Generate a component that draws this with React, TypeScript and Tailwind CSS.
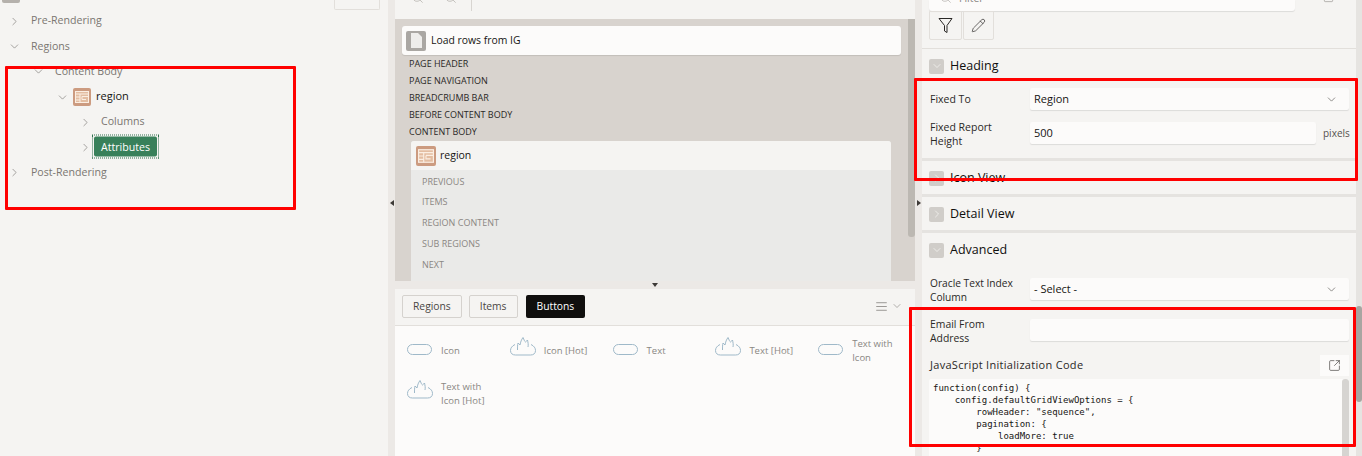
import React from "react";
import { ChevronRight, ChevronDown, Pencil, Search, AlignJustify, SquareArrowOutUpRight } from "lucide-react";

const RegionIcon = ({ size = 18 }: { size?: number }) => (
  <span className="flex items-center justify-center rounded-[2px] bg-[#cc9b80]" style={{ width: size, height: size }}>
    <svg width={size - 4} height={size - 6} viewBox="0 0 14 12" fill="none" stroke="#fbeee2" strokeWidth="1">
      <rect x="0.5" y="0.5" width="13" height="11" fill="#e3bda1" />
      <path d="M0.5 3H13.5M5 3V11.5M0.5 6H5M0.5 9H5M7 5.500H13.500M7 5.500V8.500H11" />
    </svg>
  </span>
);

const Pill = () => <span className="block h-[11px] w-[25px] rounded-full border border-[#9fb9c9]" />;

const Flame = () => (
  <svg width="26" height="19" viewBox="0 0 26 19" fill="none" stroke="#9fb9c9" strokeWidth="1" className="-mt-[6px]">
    <path d="M5 7.500C2 9 .5 11 .5 13.500c0 3 2 4.500 5 4.500h15c3 0 5-1.500 5-4.500 0-2.500-1.500-4.500-4.500-6" />
    <path d="M7.500 13c0-3 0-5 .5-7l2 2c.5-3 1.500-5.500 3-7.500 1 2 1.500 4 2.500 4.500 1-.5 1.500-1.500 2-2 .5 2.500 1 4.500 .5 7" />
  </svg>
);

const Tree = ({ indent, open, label, gap = "ml-[10px]" }: { indent: string; open?: boolean; label: React.ReactNode; gap?: string }) => (
  <div className={`flex h-[25.300px] items-center ${indent}`}>
    {open ? <ChevronDown size={13} strokeWidth={1} className="shrink-0 text-[#5f5b57]" /> : <ChevronRight size={13} strokeWidth={1} className="shrink-0 text-[#5f5b57]" />}
    <span className={`${gap} text-[#7a7671]`}>{label}</span>
  </div>
);

const Section = ({ label, open, tall }: { label: string; open?: boolean; tall?: boolean }) => (
  <div className={`flex shrink-0 items-center gap-[6px] px-[7px] ${tall ? "h-[36px] pb-[2px]" : "h-[33px] pt-px"}`}>
    <span className="flex h-[15px] w-[15px] items-center justify-center rounded-[2px] bg-[#d0cdc9] text-[#f5f4f2]">
      {open ? <ChevronDown size={12} strokeWidth={1.500} /> : <ChevronRight size={12} strokeWidth={1.500} />}
    </span>
    <span className="text-[12.500px] font-medium leading-none text-[#100f0e]">{label}</span>
  </div>
);

const Gallery = ({ hot, lines }: { hot?: boolean; lines: string[] }) => (
  <div className="flex h-[43px] items-center">
    <span className="flex w-[26px] shrink-0 justify-start">{hot ? <Flame /> : <Pill />}</span>
    <span className="ml-[8px] pt-[2px] text-[9.500px] leading-[14px] text-[#8a8783]">
      {lines.map((l) => (
        <span key={l} className="block whitespace-nowrap">{l}</span>
      ))}
    </span>
  </div>
);

const Field = ({ className = "", children }: { className?: string; children?: React.ReactNode }) => (
  <div className={`flex h-[22px] items-center rounded-[2px] bg-[#fcfbfa] px-[4px] shadow-[0_1px_1px_rgba(0,0,0,0.1)] ${className}`}>{children}</div>
);

export default function App() {
  return (
    <div className="relative flex h-[456px] w-[1362px] overflow-hidden bg-[#ece9e6] font-['Open_Sans',sans-serif] text-[11px] text-[#161513]">
      {/* Left tree */}
      <div className="relative h-full w-[388px] shrink-0 bg-[#f5f4f2] text-[10.600px]">
        <div className="flex h-[8.500px] items-start justify-between pl-[2px] pr-[8px]">
          <span className="h-[3px] w-[18px] rounded-b-[2px] bg-[#b5b1ac]" />
          <span className="h-[10px] w-[46px] rounded-b-[2px] border border-t-0 border-[#e2dfdb]" />
        </div>
        <div className="pl-[8px]">
          <Tree indent="" label="Pre-Rendering" />
          <Tree indent="" open label="Regions" />
          <Tree indent="pl-[24px]" open label="Content Body" />
          <div className="flex h-[25.300px] items-center pl-[48px]">
            <ChevronDown size={13} strokeWidth={1} className="text-[#5f5b57]" />
            <span className="ml-[4px]"><RegionIcon /></span>
            <span className="ml-[5px] pb-[2px] text-[11px]">region</span>
          </div>
          <Tree indent="pl-[71px]" label="Columns" gap="ml-[9px]" />
          <div className="flex h-[25.300px] items-center pl-[71px]">
            <ChevronRight size={13} strokeWidth={1} className="text-[#5f5b57]" />
            <span className="-my-px -mr-px -translate-y-[1.500px] border border-dotted border-[#31704f] p-px">
              <span className="block rounded-[2px] bg-[#38805a] px-[7px] py-[2px] leading-[16px] text-white">Attributes</span>
            </span>
          </div>
          <Tree indent="" label="Post-Rendering" />
        </div>
      </div>

      {/* Left splitter */}
      <div className="flex w-[7px] shrink-0 items-center justify-center pb-[50px]">
        <span className="h-0 w-0 border-y-[3px] border-r-[4px] border-y-transparent border-r-[#3d3a37]" />
      </div>

      {/* Center */}
      <div className="flex h-full w-[520px] shrink-0 flex-col">
        <div className="relative flex h-[19px] shrink-0 items-start bg-[#f5f4f2] pl-[16px]">
          <Search size={13} strokeWidth={1} className="-mt-[9px] text-[#9a9691]" />
          <Search size={13} strokeWidth={1} className="-mt-[9px] ml-[20px] text-[#9a9691]" />
          <span className="ml-[14px] h-[11px] w-px bg-[#d8d5d1]" />
          <span className="ml-[16px] -mt-[12px] text-[#3b3027]">2</span>
        </div>
        <div className="flex h-[262px] shrink-0 overflow-hidden bg-[#d8d3ce]">
          <div className="min-w-0 flex-1 pl-[7px] pt-[7px]">
            <div className="flex h-[29px] items-center gap-[5px] rounded-[3px] bg-[#fcfbfa] pl-[4px] shadow-[0_1px_1px_rgba(0,0,0,0.1)]">
              <span className="flex h-[20px] w-[20px] items-center justify-center rounded-[2px] bg-[#aaa7a3]">
                <svg width="11" height="15" viewBox="0 0 11 15"><path d="M0 0H7L11 4V15H0Z" fill="#eeedeb" /></svg>
              </span>
              <span className="text-[10.400px]">Load rows from IG</span>
            </div>
            <div className="pl-[7px] text-[9px] text-[#2a2826]">
              {["PAGE HEADER", "PAGE NAVIGATION", "BREADCRUMB BAR", "BEFORE CONTENT BODY", "CONTENT BODY"].map((t) => (
                <div key={t} className="flex h-[17px] items-center">{t}</div>
              ))}
            </div>
            <div className="ml-[9px] mr-[10px] mt-px h-[200px] overflow-hidden rounded-t-[3px] bg-[#eaeae8]">
              <div className="flex h-[29px] items-center gap-[4px] bg-[#f5f4f2] pl-[5px] text-[10.500px]">
                <RegionIcon size={20} />
                <span>region</span>
              </div>
              <div className="pl-[11px] pt-px text-[9px] text-[#8a8783]">
                {["PREVIOUS", "ITEMS", "REGION CONTENT", "SUB REGIONS", "NEXT"].map((t) => (
                  <div key={t} className="flex h-[20.800px] items-center">{t}</div>
                ))}
              </div>
            </div>
          </div>
          <div className="w-[7px] shrink-0" />
          <div className="h-full w-[7px] shrink-0">
            <div className="h-[218px] rounded-b-[3px] bg-[#bcb8b2]" />
          </div>
        </div>
        <div className="flex h-[8px] shrink-0 items-center justify-center">
          <span className="h-0 w-0 border-x-[3.500px] border-t-[4px] border-x-transparent border-t-[#3d3a37]" />
        </div>
        <div className="flex h-[37px] shrink-0 items-center border-b border-[#e2dfdb] bg-[#f5f4f2] pb-[2px] pl-[7px] text-[10.300px]">
          <span className="rounded-[2px] border border-[#d5d2ce] px-[10px] py-px leading-[19px] text-[#4a4744]">Regions</span>
          <span className="ml-[7px] rounded-[2px] border border-[#d5d2ce] px-[10px] py-px leading-[19px] text-[#4a4744]">Items</span>
          <span className="ml-[8px] rounded-[2px] bg-[#100f0e] px-[11px] py-[2px] font-medium leading-[19px] text-white">Buttons</span>
          <span className="ml-auto flex items-center gap-[3px] pr-[12px] text-[#6b6763]">
            <AlignJustify size={13} strokeWidth={1.200} />
            <ChevronDown size={12} strokeWidth={1} />
          </span>
        </div>
        <div className="min-h-0 flex-1 bg-[#fcfbfa] pl-[12px] pr-[4px] pt-[2px]">
          <div className="grid grid-cols-[repeat(5,102.800px)]">
            <Gallery lines={["Icon"]} />
            <Gallery hot lines={["Icon [Hot]"]} />
            <Gallery lines={["Text"]} />
            <Gallery hot lines={["Text [Hot]"]} />
            <Gallery lines={["Text with", "Icon"]} />
            <Gallery hot lines={["Text with", "Icon [Hot]"]} />
          </div>
        </div>
      </div>

      {/* Right splitter */}
      <div className="flex w-[7px] shrink-0 items-center justify-center pb-[50px]">
        <span className="h-0 w-0 border-y-[3px] border-l-[4px] border-y-transparent border-l-[#3d3a37]" />
      </div>

      {/* Property editor */}
      <div className="flex h-full w-[434px] shrink-0 flex-col overflow-hidden bg-[#f5f4f2]">
        <div className="flex h-[11px] shrink-0 items-start pl-[7px]">
          <div className="flex h-[11px] w-[366px] items-start rounded-b-[3px] bg-[#fcfbfa] pl-[10px] shadow-[0_1px_1px_rgba(0,0,0,0.1)]">
            <Search size={13} strokeWidth={1} className="-mt-[9px] text-[#9a9691]" />
            <span className="-mt-[9px] ml-[7px] text-[10.500px] leading-[14px] text-[#8a8783]">Filter</span>
          </div>
          <SquareArrowOutUpRight size={11} strokeWidth={1} className="-mt-[8px] ml-[28px] text-[#6b6763]" />
        </div>
        <div className="flex h-[29px] shrink-0 gap-px pl-[7px]">
          <span className="flex w-[33px] items-center justify-center rounded-b-[2px] border border-[#e2dfdb]">
            <svg width="15" height="17" viewBox="0 0 15 17" fill="none" stroke="#2a2826" strokeWidth="1">
              <path d="M1 1.500H14L9 8.500V15.500L6.500 14V8.500Z" strokeLinejoin="round" />
            </svg>
          </span>
          <span className="flex w-[31px] items-center justify-center rounded-b-[2px] border border-[#e2dfdb]"><Pencil size={15} strokeWidth={1.100} className="text-[#2a2826]" /></span>
        </div>
        <div className="mt-[8px] h-px shrink-0 bg-[#e2dfdb]" />
        <Section label="Heading" open tall />
        <div className="shrink-0 px-[7px]">
          <div className="mt-[3px] flex h-[22px] items-center text-[10.500px]">
            <span className="w-[101px] shrink-0 pl-px pt-[2px] text-[#2a2826]">Fixed To</span>
            <Field className="flex-1 justify-between text-[11px]">Region <ChevronDown size={13} strokeWidth={1.200} className="mr-[7px] text-[#55524f]" /></Field>
          </div>
          <div className="mt-[8px] flex h-[30px] items-center text-[10.500px]">
            <span className="w-[101px] shrink-0 pl-px pt-[2px] leading-[14px] text-[#2a2826]">Fixed Report<br />Height</span>
            <Field className="flex-1 text-[11px]">500</Field>
            <span className="ml-[7px] w-[26px] whitespace-nowrap pt-px text-[10px] text-[#55524f]">pixels</span>
          </div>
        </div>
        <div className="mt-[10px] h-[3px] shrink-0 bg-[#e5e3e0]" />
        <Section label="Icon View" />
        <div className="h-[3px] shrink-0 bg-[#e5e3e0]" />
        <Section label="Detail View" />
        <div className="h-[3px] shrink-0 bg-[#e5e3e0]" />
        <Section label="Advanced" open />
        <div className="shrink-0 px-[7px]">
          <div className="mt-[10px] flex h-[28px] items-start text-[10.200px]">
            <span className="w-[101px] shrink-0 pl-px leading-[14px] text-[#2a2826]">Oracle Text Index<br />Column</span>
            <Field className="mt-[2px] flex-1 justify-between text-[11px]">- Select - <ChevronDown size={13} strokeWidth={1.200} className="mr-[7px] text-[#55524f]" /></Field>
          </div>
          <div className="mt-[13px] flex h-[28px] items-start text-[10.400px]">
            <span className="w-[101px] shrink-0 pl-px leading-[14px] text-[#2a2826]">Email From<br />Address</span>
            <Field className="mt-[2px] flex-1" />
          </div>
          <div className="mt-[10px] flex h-[21px] items-center justify-between">
            <span className="pl-px text-[11px] tracking-[0.300px] text-[#2a2826]">JavaScript Initialization Code</span>
            <span className="flex h-[21px] w-[29px] items-center justify-center bg-[#fcfbfa]"><SquareArrowOutUpRight size={13} strokeWidth={1.200} className="text-[#3d3a37]" /></span>
          </div>
          <div className="mt-[3px] flex h-[90px] overflow-hidden rounded-t-[2px] bg-[#fcfbfa]">
            <pre className="min-w-0 flex-1 pl-[4px] pt-[3px] font-['DejaVu_Sans_Mono',monospace] text-[9px] leading-[12px] text-[#161513]">{`function(config) {
    config.defaultGridViewOptions = {
        rowHeader: "sequence",
        pagination: {
            loadMore: true
        }`}</pre>
            <div className="w-[7px] shrink-0 rounded-t-[3px] bg-[#d6d4d1]" />
          </div>
        </div>
      </div>

      {/* Outer scrollbar */}
      <div className="h-full w-[6px] shrink-0 bg-[#e6e4e1] pt-[306px]">
        <div className="h-[96px] rounded-[3px] bg-[#a8a5a1]" />
      </div>

      {/* Red annotations */}
      <div className="absolute left-[5px] top-[66px] h-[144px] w-[291px] rounded-[1px] border-[3px] border-[#ff0000]" />
      <div className="absolute left-[914px] top-[78px] h-[103px] w-[444px] rounded-[1px] border-[3px] border-[#ff0000]" />
      <div className="absolute left-[909px] top-[307px] h-[140px] w-[447px] rounded-[1px] border-[3px] border-[#ff0000]" />
    </div>
  );
}
